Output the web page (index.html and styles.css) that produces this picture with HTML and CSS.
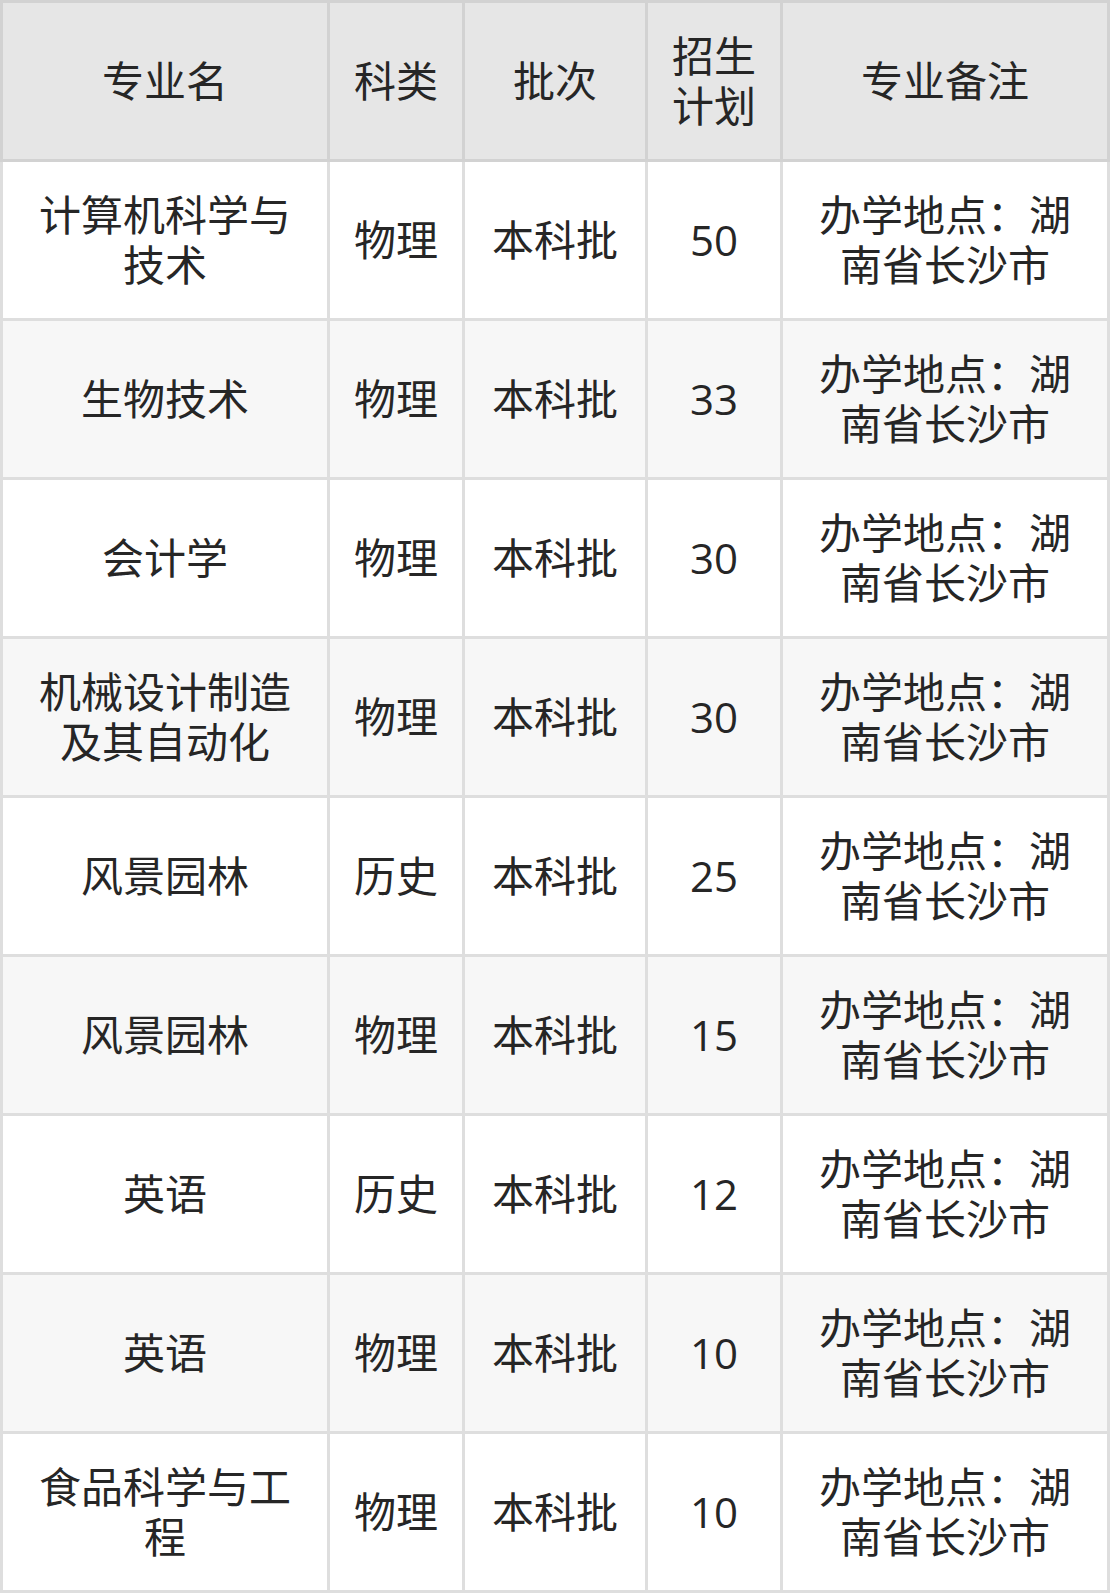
FILE: index.html
```html
<!DOCTYPE html>
<html lang="zh-CN">
<head>
<meta charset="utf-8">
<title>招生计划</title>
<link rel="stylesheet" href="styles.css">
</head>
<body>
<table class="plan">
  <colgroup>
    <col class="c-name">
    <col class="c-type">
    <col class="c-batch">
    <col class="c-num">
    <col class="c-note">
  </colgroup>
  <thead>
    <tr><th>专业名</th><th>科类</th><th>批次</th><th>招生计划</th><th>专业备注</th></tr>
  </thead>
  <tbody>
    <tr><td>计算机科学与技术</td><td>物理</td><td>本科批</td><td>50</td><td>办学地点：湖南省长沙市</td></tr>
    <tr><td>生物技术</td><td>物理</td><td>本科批</td><td>33</td><td>办学地点：湖南省长沙市</td></tr>
    <tr><td>会计学</td><td>物理</td><td>本科批</td><td>30</td><td>办学地点：湖南省长沙市</td></tr>
    <tr><td>机械设计制造及其自动化</td><td>物理</td><td>本科批</td><td>30</td><td>办学地点：湖南省长沙市</td></tr>
    <tr><td>风景园林</td><td>历史</td><td>本科批</td><td>25</td><td>办学地点：湖南省长沙市</td></tr>
    <tr><td>风景园林</td><td>物理</td><td>本科批</td><td>15</td><td>办学地点：湖南省长沙市</td></tr>
    <tr><td>英语</td><td>历史</td><td>本科批</td><td>12</td><td>办学地点：湖南省长沙市</td></tr>
    <tr><td>英语</td><td>物理</td><td>本科批</td><td>10</td><td>办学地点：湖南省长沙市</td></tr>
    <tr><td>食品科学与工程</td><td>物理</td><td>本科批</td><td>10</td><td>办学地点：湖南省长沙市</td></tr>
  </tbody>
</table>
</body>
</html>
```

FILE: styles.css
```css
html, body {
  margin: 0;
  padding: 0;
  background: #ffffff;
}

.plan {
  width: 1110px;
  table-layout: fixed;
  border-collapse: collapse;
  font-family: "Open Sans", "Noto Sans CJK SC", sans-serif;
  font-size: 42px;
  line-height: 50px;
  color: #262626;
}

.c-name { width: 327px; }
.c-type { width: 135px; }
.c-batch { width: 183px; }
.c-num { width: 135px; }
.c-note { width: 327px; }

.plan th,
.plan td {
  height: 159px;
  padding: 0 24px;
  text-align: center;
  vertical-align: middle;
  font-weight: normal;
  box-sizing: border-box;
}

.plan th {
  background: #e6e6e6;
  border: 3px solid #d2d2d2;
}

.plan td {
  border: 3px solid #dedede;
}

.plan tbody tr:nth-child(even) td {
  background: #f7f7f7;
}
```
